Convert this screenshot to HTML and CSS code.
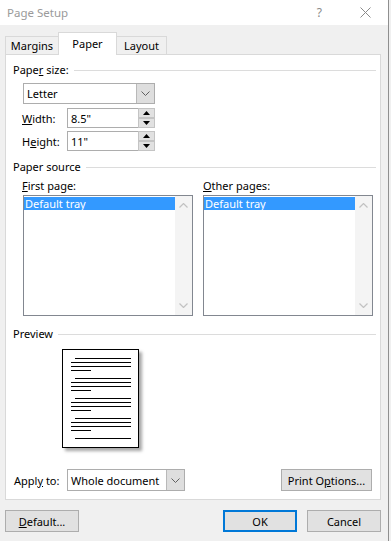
FILE: index.html
```html
<!DOCTYPE html>
<html>
<head>
<meta charset="utf-8">
<link rel="stylesheet" href="styles.css">
</head>
<body>
<div class="dialog">
  <div class="titlebar">
    <span class="title">Page Setup</span>
    <span class="help">?</span>
    <span class="close"><svg width="11" height="11" viewBox="0 0 11 11"><path d="M0.5 0.5 L10.5 10.5 M10.5 0.5 L0.5 10.5" stroke="#8a8a8a" stroke-width="1" fill="none"/></svg></span>
  </div>
  <div class="tabs">
    <div class="tab tab-margins">Margins</div>
    <div class="tab tab-paper active">Paper</div>
    <div class="tab tab-layout">Layout</div>
  </div>
  <div class="panel">
    <div class="gtitle gt-size"><span>Pape<u>r</u> size:</span><i class="rule"></i></div>
    <div class="combo combo-size">
      <span class="combo-text">Letter</span>
      <span class="combo-btn"><svg width="9" height="5" viewBox="0 0 9 5"><path d="M0.5 0.5 L4.5 4.5 L8.5 0.5" stroke="#606060" stroke-width="1" fill="none"/></svg></span>
    </div>
    <div class="field-row fr-width">
      <span class="flabel"><u>W</u>idth:</span>
      <div class="spin">
        <span class="spin-text">8.5"</span>
        <span class="spin-btns">
          <span class="spin-btn"><svg width="7" height="4" viewBox="0 0 7 4"><path d="M0 4 L3.5 0 L7 4 Z" fill="#000"/></svg></span>
          <span class="spin-btn"><svg width="7" height="4" viewBox="0 0 7 4"><path d="M0 0 L7 0 L3.5 4 Z" fill="#000"/></svg></span>
        </span>
      </div>
    </div>
    <div class="field-row fr-height">
      <span class="flabel">H<u>e</u>ight:</span>
      <div class="spin">
        <span class="spin-text">11"</span>
        <span class="spin-btns">
          <span class="spin-btn"><svg width="7" height="4" viewBox="0 0 7 4"><path d="M0 4 L3.5 0 L7 4 Z" fill="#000"/></svg></span>
          <span class="spin-btn"><svg width="7" height="4" viewBox="0 0 7 4"><path d="M0 0 L7 0 L3.5 4 Z" fill="#000"/></svg></span>
        </span>
      </div>
    </div>
    <div class="gtitle gt-source"><span>Paper source</span><i class="rule"></i></div>
    <div class="sources">
      <div class="srccol">
        <div class="srclabel"><u>F</u>irst page:</div>
        <div class="list">
          <div class="list-items"><div class="item selected">Default tray</div></div>
          <div class="scroll">
            <svg width="9" height="5" viewBox="0 0 9 5"><path d="M0.5 4.5 L4.5 0.5 L8.5 4.5" stroke="#c2c2c2" stroke-width="1.2" fill="none"/></svg>
            <svg width="9" height="5" viewBox="0 0 9 5"><path d="M0.5 0.5 L4.5 4.5 L8.5 0.5" stroke="#c2c2c2" stroke-width="1.2" fill="none"/></svg>
          </div>
        </div>
      </div>
      <div class="srccol">
        <div class="srclabel"><u>O</u>ther pages:</div>
        <div class="list">
          <div class="list-items"><div class="item selected">Default tray</div></div>
          <div class="scroll">
            <svg width="9" height="5" viewBox="0 0 9 5"><path d="M0.5 4.5 L4.5 0.5 L8.5 4.5" stroke="#c2c2c2" stroke-width="1.2" fill="none"/></svg>
            <svg width="9" height="5" viewBox="0 0 9 5"><path d="M0.5 0.5 L4.5 4.5 L8.5 0.5" stroke="#c2c2c2" stroke-width="1.2" fill="none"/></svg>
          </div>
        </div>
      </div>
    </div>
    <div class="gtitle gt-preview"><span>Preview</span><i class="rule"></i></div>
    <div class="page">
      <svg width="75" height="97" viewBox="0 0 75 97">
        <g stroke="#000" stroke-width="1.2">
          <path d="M12 8.5 H68 M8 12.5 H68 M8 16.5 H68 M8 20.5 H28"/>
          <path d="M12 28.5 H68 M8 32.5 H68 M8 36.5 H68 M8 40.5 H28"/>
          <path d="M12 48.5 H68 M8 52.5 H68 M8 56.5 H68 M8 60.5 H28"/>
          <path d="M12 68.5 H68 M8 72.5 H68 M8 76.5 H68 M8 80.5 H28"/>
          <path d="M12 88.5 H68"/>
        </g>
      </svg>
    </div>
    <div class="apply-row">
      <span class="alabel">Appl<u>y</u> to:</span>
      <div class="combo combo-apply">
        <span class="combo-text">Whole document</span>
        <span class="combo-btn"><svg width="9" height="5" viewBox="0 0 9 5"><path d="M0.5 0.5 L4.5 4.5 L8.5 0.5" stroke="#606060" stroke-width="1" fill="none"/></svg></span>
      </div>
      <button class="btn btn-print">Print O<u>p</u>tions...</button>
    </div>
  </div>
  <div class="footer">
    <button class="btn btn-default"><u>D</u>efault...</button>
    <button class="btn btn-ok">OK</button>
    <button class="btn btn-cancel">Cancel</button>
  </div>
</div>
</body>
</html>
```

FILE: styles.css
```css
html, body {
  margin: 0;
  padding: 0;
  background: #f0f0f0;
}

.dialog {
  width: 388px;
  height: 541px;
  background: #f0f0f0;
  border-right: 1px solid #8f8f8f;
  font-family: "Noto Sans", sans-serif;
  font-size: 11px;
  color: #000;
  display: flex;
  flex-direction: column;
  box-sizing: content-box;
}

u {
  text-decoration: underline;
  text-underline-offset: 1px;
}

/* title bar */
.titlebar {
  height: 25px;
  background: #fff;
  display: flex;
  align-items: center;
  padding-left: 7px;
  flex: none;
}

.title {
  color: #9a9a9a;
  font-size: 11.5px;
}

.help {
  margin-left: auto;
  color: #8a8a8a;
  font-size: 12px;
  line-height: 12px;
}

.close {
  display: flex;
  margin-left: 38px;
  margin-right: 17px;
}

/* tabs */
.tabs {
  height: 29px;
  display: flex;
  align-items: flex-end;
  padding-left: 5px;
  position: relative;
  z-index: 1;
  flex: none;
}

.tab {
  height: 18px;
  box-sizing: border-box;
  border: 1px solid #d9d9d9;
  border-bottom: none;
  display: flex;
  align-items: center;
  justify-content: center;
  background: #f0f0f0;
  line-height: 14px;
}

.tab-margins { width: 54px; }
.tab-paper { width: 59px; margin-left: -1px; }
.tab-layout { width: 51px; margin-left: -1px; }

.tab.active {
  height: 23px;
  background: #fff;
  margin-bottom: -1px;
  padding-bottom: 1px;
}

/* panel */
.panel {
  margin-left: 5px;
  width: 376px;
  height: 446px;
  box-sizing: border-box;
  border: 1px solid #d9d9d9;
  background: #fff;
  display: flex;
  flex-direction: column;
  flex: none;
}

.gtitle {
  display: flex;
  align-items: center;
  height: 14px;
  line-height: 14px;
  padding-left: 7px;
  margin-right: 4px;
  gap: 5px;
}

.gtitle .rule {
  flex: 1;
  height: 1px;
  background: #dcdcdc;
}

.gt-size { margin-top: 8px; }
.gt-source { margin-top: 9px; }
.gt-preview { margin-top: 11px; }

/* combos */
.combo {
  display: flex;
  box-sizing: border-box;
  border: 1px solid #adadad;
  background: #fff;
}

.combo-text {
  flex: 1;
  padding-left: 3px;
  display: flex;
  align-items: center;
}

.combo-btn {
  width: 17px;
  background: #dedede;
  border-left: 1px solid #b9b9b9;
  display: flex;
  align-items: center;
  justify-content: center;
}

.combo-size {
  margin-left: 17px;
  margin-top: 6px;
  width: 132px;
  height: 21px;
}

.combo-apply {
  width: 118px;
  height: 22px;
}

/* width / height fields */
.field-row {
  display: flex;
  align-items: center;
  height: 20px;
  padding-left: 16px;
}

.fr-width { margin-top: 4px; }
.fr-height { margin-top: 3px; }

.flabel {
  width: 45px;
}

.spin {
  width: 88px;
  height: 20px;
  box-sizing: border-box;
  border: 1px solid #adadad;
  display: flex;
}

.spin-text {
  flex: 1;
  padding-left: 3px;
  display: flex;
  align-items: center;
}

.spin-btns {
  width: 16px;
  display: flex;
  flex-direction: column;
}

.spin-btn {
  flex: 1;
  background: #e1e1e1;
  border: 1px solid #c4c4c4;
  margin-top: -1px;
  margin-right: -1px;
  display: flex;
  align-items: center;
  justify-content: center;
}

.spin-btn + .spin-btn {
  margin-top: 0;
  margin-bottom: -1px;
}

/* paper source lists */
.sources {
  display: flex;
  gap: 10px;
  padding-left: 16px;
  margin-top: 5px;
}

.srccol {
  width: 171px;
  display: flex;
  flex-direction: column;
}

.srccol + .srccol .list {
  margin-left: 0;
}

.srclabel {
  height: 14px;
  line-height: 14px;
}

.list {
  margin-top: 2px;
  margin-left: 1px;
  width: 170px;
  height: 121px;
  box-sizing: border-box;
  border: 1px solid #828790;
  display: flex;
}

.list-items {
  flex: 1;
  padding-top: 1px;
}

.item {
  height: 13px;
  line-height: 13px;
  padding-left: 1px;
}

.item.selected {
  background: #3399ff;
  color: #fff;
}

.scroll {
  width: 17px;
  background: #f4f4f4;
  display: flex;
  flex-direction: column;
  align-items: center;
  justify-content: space-between;
  padding: 7px 0 7px;
  box-sizing: border-box;
}

/* preview */
.page {
  margin-top: 8px;
  margin-left: 56px;
  width: 77px;
  height: 99px;
  box-sizing: border-box;
  border: 1px solid #000;
  background: #fff;
  box-shadow: 3px 3px 3px rgba(0, 0, 0, 0.35);
  display: flex;
}

/* apply row */
.apply-row {
  display: flex;
  align-items: center;
  margin-top: 21px;
  padding-left: 8px;
  padding-right: 8px;
  height: 22px;
}

.alabel {
  width: 53px;
}

/* buttons */
.btn {
  font-family: "Noto Sans", sans-serif;
  font-size: 11px;
  color: #000;
  background: #e1e1e1;
  border: 1px solid #adadad;
  height: 22px;
  box-sizing: border-box;
  padding: 0;
  margin: 0;
  display: flex;
  align-items: center;
  justify-content: center;
}

.btn-print {
  margin-left: auto;
  width: 91px;
}

.footer {
  display: flex;
  margin-top: 10px;
  padding-left: 5px;
  padding-right: 7px;
}

.btn-default {
  width: 74px;
}

.btn-ok {
  margin-left: auto;
  width: 74px;
  border: 2px solid #0078d7;
}

.btn-cancel {
  margin-left: 10px;
  width: 74px;
}
```
